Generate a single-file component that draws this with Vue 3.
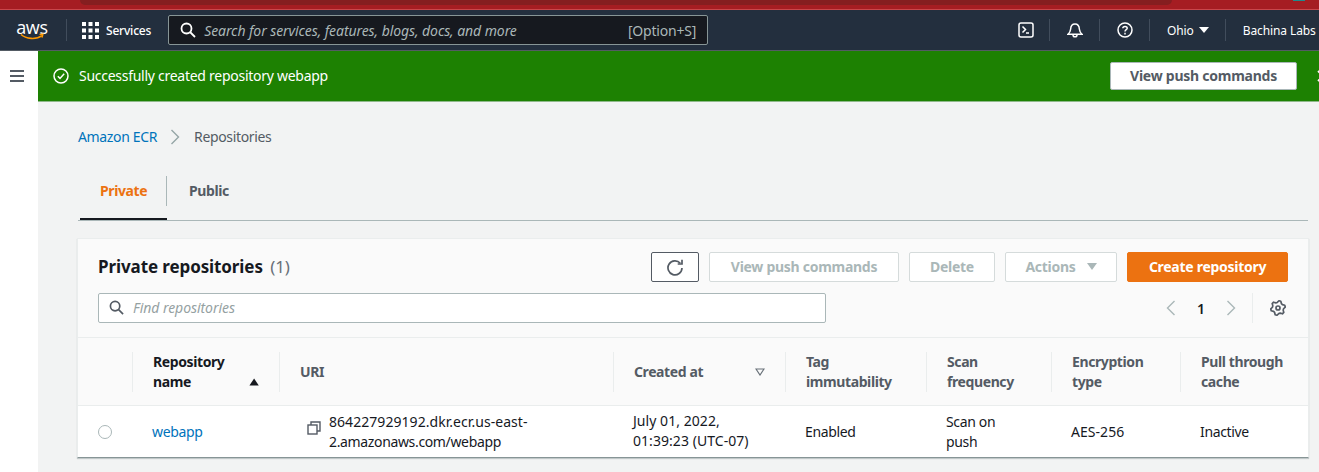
<template>
  <div class="page">
    <div class="browser-strip">
      <div class="strip-tab"></div>
      <div class="strip-dot"></div>
    </div>

    <header class="topnav">
      <div class="logo">
        <span class="logo-text">aws</span>
        <svg class="logo-smile" width="24" height="8" viewBox="0 0 24 8">
          <path d="M1 1.5C6 6 16 7 22 2.6" fill="none" stroke="#ff9900" stroke-width="1.6" />
          <path d="M19.5 1.4L23 1.2L22 4.6" fill="none" stroke="#ff9900" stroke-width="1.3" />
        </svg>
      </div>
      <span class="nav-sep first"></span>
      <svg class="grid-icon" width="17" height="17" viewBox="0 0 17 17" fill="#fff">
        <template v-for="y in [0, 6.5, 13]" :key="y">
          <rect v-for="x in [0, 6.5, 13]" :key="x" :x="x" :y="y" width="4" height="4" />
        </template>
      </svg>
      <span class="services">Services</span>
      <div class="search">
        <svg width="16" height="16" viewBox="0 0 16 16" fill="none" stroke="#fff" stroke-width="1.8">
          <circle cx="6.5" cy="6.5" r="5" />
          <path d="M10 10l5 5" />
        </svg>
        <span class="search-text">Search for services, features, blogs, docs, and more</span>
        <span class="search-key">[Option+S]</span>
      </div>
      <div class="nav-right">
        <svg class="nav-icon" width="16" height="16" viewBox="0 0 16 16" fill="none" stroke="#fff" stroke-width="1.5">
          <rect x="1" y="1" width="14" height="14" rx="2" />
          <path d="M4.500 4.500L7.500 7.500L4.500 10.500M8 11h3" />
        </svg>
        <span class="nav-sep"></span>
        <svg class="nav-icon" width="16" height="16" viewBox="0 0 16 16" fill="none" stroke="#fff" stroke-width="1.5">
          <path d="M1 12.200h14c-1.600-1.400-2.400-2.600-2.600-5C12.200 4 10.600 2 8 2S3.800 4 3.600 7.200c-.2 2.400-1 3.600-2.600 5z" />
          <path d="M6 13c0 2.400 4 2.400 4 0" />
        </svg>
        <span class="nav-sep"></span>
        <svg class="nav-icon" width="16" height="16" viewBox="0 0 16 16" fill="none" stroke="#fff" stroke-width="1.5">
          <circle cx="8" cy="8" r="7" />
          <path d="M5.800 6.200C5.900 3.800 10.200 3.800 10.200 6.200C10.200 7.800 8 7.600 8 9.600" />
          <path d="M8 10.800v1.700" />
        </svg>
        <span class="nav-sep"></span>
        <span class="nav-label ohio">Ohio</span>
        <span class="nav-caret"></span>
        <span class="nav-sep"></span>
        <span class="nav-label account">Bachina Labs</span>
      </div>
    </header>

    <div class="body">
      <aside class="side">
        <svg width="14" height="12" viewBox="0 0 14 12" fill="#545b64">
          <rect width="14" height="2" />
          <rect y="5" width="14" height="2" />
          <rect y="10" width="14" height="2" />
        </svg>
      </aside>

      <main class="main">
        <div class="flash">
          <svg width="16" height="16" viewBox="0 0 16 16" fill="none" stroke="#fff" stroke-width="1.5">
            <circle cx="8" cy="8" r="7" />
            <path d="M4.800 8.200L7 10.400L11.200 5.800" />
          </svg>
          <span class="flash-text">Successfully created repository webapp</span>
          <button class="flash-btn">View push commands</button>
          <svg class="flash-x" width="12" height="12" viewBox="0 0 12 12" stroke="#fff" stroke-width="1.8" fill="none">
            <path d="M1 1l10 10M11 1L1 11" />
          </svg>
        </div>

        <div class="content">
          <nav class="crumbs">
            <a class="link">Amazon ECR</a>
            <svg width="10" height="16" viewBox="0 0 10 16" fill="none" stroke="#95a5a6" stroke-width="1.4">
              <path d="M1.500 1l7 7-7 7" />
            </svg>
            <span>Repositories</span>
          </nav>

          <div class="tabs">
            <div class="tab active"><span>Private</span></div>
            <div class="tab public"><span>Public</span></div>
          </div>

          <section class="card">
            <div class="card-head">
              <div class="head-row">
                <h2>Private repositories <span class="count">(1)</span></h2>
                <div class="actions">
                  <button class="btn refresh">
                    <svg width="16" height="17" viewBox="0 0 16 17" fill="none" stroke="#545b64" stroke-width="1.7">
                      <path d="M13.300 4.300A7 7 0 1 0 15 9" />
                      <path d="M15 .8V5h-4.300" />
                    </svg>
                  </button>
                  <button class="btn off wide">View push commands</button>
                  <button class="btn off del">Delete</button>
                  <button class="btn off act">Actions <i class="caret"></i></button>
                  <button class="btn primary">Create repository</button>
                </div>
              </div>
              <div class="head-row second">
                <div class="find">
                  <svg width="15" height="15" viewBox="0 0 16 16" fill="none" stroke="#545b64" stroke-width="1.8">
                    <circle cx="6.500" cy="6.500" r="5" />
                    <path d="M10 10l5 5" />
                  </svg>
                  <span>Find repositories</span>
                </div>
                <div class="pager">
                  <svg width="10" height="16" viewBox="0 0 10 16" fill="none" stroke="#aab7b8" stroke-width="1.4">
                    <path d="M8.500 1L1.500 8l7 7" />
                  </svg>
                  <span class="page-no">1</span>
                  <svg width="10" height="16" viewBox="0 0 10 16" fill="none" stroke="#aab7b8" stroke-width="1.4">
                    <path d="M1.500 1l7 7-7 7" />
                  </svg>
                  <span class="pager-sep"></span>
                  <svg width="16" height="16" viewBox="0 0 16 16" fill="none" stroke="#545b64" stroke-width="1.700">
                    <polygon :points="gearPoints" stroke-linejoin="round" />
                    <circle cx="8" cy="8" r="2" />
                  </svg>
                </div>
              </div>
            </div>

            <div class="table">
              <div class="th first-col"></div>
              <div v-for="c in columns" :key="c.label" class="th" :class="{ dark: c.dark }">
                <span class="th-inner">
                  <span class="th-label" :class="{ narrow: c.narrow }">{{ c.label }}</span>
                  <svg v-if="c.sort === 'up'" class="sort up" width="12" height="8" viewBox="0 0 12 8" fill="#16191f">
                    <path d="M6 0l5.500 8H.5z" />
                  </svg>
                  <svg v-if="c.sort === 'down'" class="sort" width="10" height="8" viewBox="0 0 10 8" fill="none" stroke="#687078" stroke-width="1.200">
                    <path d="M1 1h8L5 7z" />
                  </svg>
                </span>
              </div>

              <div class="td radio-cell"><span class="radio"></span></div>
              <div class="td"><a class="link">webapp</a></div>
              <div class="td uri">
                <svg width="14" height="14" viewBox="0 0 14 14" fill="none" stroke="#545b64" stroke-width="1.400">
                  <rect x="1" y="4" width="9" height="9" />
                  <path d="M4 4V1h9v9h-3" />
                </svg>
                <span>
                  <span class="line num">864227929192.dkr.ecr.us-east-</span>
                  <span class="line">2.amazonaws.com/webapp</span>
                </span>
              </div>
              <div class="td num">July 01, 2022,<br />01:39:23 (UTC-07)</div>
              <div class="td">Enabled</div>
              <div class="td">Scan on<br />push</div>
              <div class="td num">AES-256</div>
              <div class="td">Inactive</div>
            </div>
          </section>
        </div>
      </main>
    </div>
  </div>
</template>

<script setup>
const columns = [
  { label: 'Repository name', sort: 'up', dark: true, narrow: true },
  { label: 'URI' },
  { label: 'Created at', sort: 'down' },
  { label: 'Tag immutability', narrow: true },
  { label: 'Scan frequency', narrow: true },
  { label: 'Encryption type', narrow: true },
  { label: 'Pull through cache', narrow: true },
]

// six lobes, flat on top, for the preferences gear
const gearPoints = Array.from({ length: 24 }, (_, i) => {
  const step = i % 4
  const r = step === 1 || step === 2 ? 7.3 : 5.6
  const a = ((i * 15 - 97.5) * Math.PI) / 180
  return `${(8 + r * Math.cos(a)).toFixed(2)},${(8 + r * Math.sin(a)).toFixed(2)}`
}).join(' ')
</script>

<style>
html,
body {
  margin: 0;
  overflow: hidden;
}
</style>

<style scoped>
.page {
  width: 1319px;
  height: 472px;
  overflow: hidden;
  font-family: "Noto Sans", "Liberation Sans", sans-serif;
  font-size: 14px;
  color: #16191f;
  background: #fff;
  display: flex;
  flex-direction: column;
}
.browser-strip {
  height: 9px;
  flex: none;
  background: #a51d22;
  border-bottom: 1px solid #c9474b;
  display: flex;
}
.strip-tab {
  width: 1092px;
  height: 5px;
  margin-left: 80px;
  background: #851e20;
  border-radius: 0 0 6px 6px;
}
.strip-dot {
  width: 12px;
  height: 1px;
  margin-left: 121px;
  background: #1f8a8c;
}
.topnav {
  height: 40px;
  flex: none;
  background: #232f3e;
  display: flex;
  align-items: center;
  color: #fff;
  border-bottom: 1px solid #545b64;
}
.logo {
  width: 32px;
  margin-left: 16px;
  display: flex;
  flex-direction: column;
  align-items: center;
}
.logo-text {
  font-size: 18px;
  line-height: 17px;
  letter-spacing: -0.3px;
  font-family: "Open Sans", sans-serif;
}
.logo-smile {
  margin-top: -3px;
}
.nav-sep {
  width: 1px;
  height: 22px;
  background: #414d5c;
  flex: none;
}
.nav-sep.first {
  margin-left: 18px;
}
.grid-icon {
  margin-left: 15px;
}
.services {
  margin-left: 7px;
  font-size: 12px;
  font-weight: 500;
  letter-spacing: -0.2px;
}
.search {
  width: 521px;
  height: 28px;
  margin-left: 17px;
  background: #16191f;
  border: 1px solid #879596;
  border-radius: 2px;
  display: flex;
  align-items: center;
  padding: 0 6px 0 11px;
  color: #aab7b8;
}
.search-text {
  margin-left: 8px;
  font-style: italic;
  letter-spacing: -0.08px;
}
.search-key {
  margin-left: auto;
  margin-right: 5px;
  letter-spacing: -0.2px;
}
.nav-right {
  margin-left: auto;
  display: flex;
  align-items: center;
  width: 302px;
}
.nav-icon {
  flex: none;
  margin-right: 16px;
}
.nav-right > svg:first-child {
  margin-left: 1px;
  margin-right: 15px;
}
.nav-right > .nav-sep {
  margin-right: 17px;
}
.nav-label {
  font-size: 12px;
  letter-spacing: -0.1px;
  white-space: nowrap;
}
.nav-caret {
  width: 0;
  height: 0;
  margin: 0 16px 0 5px;
  border-left: 5px solid transparent;
  border-right: 5px solid transparent;
  border-top: 6px solid #fff;
}
.body {
  flex: 1;
  display: flex;
  min-height: 0;
}
.side {
  width: 38px;
  flex: none;
  background: #fff;
  box-shadow: 1px 0 0 #d5dbdb;
  padding: 16px 0 0 10px;
  box-sizing: border-box;
}
.main {
  flex: 1;
  min-width: 0;
  background: #f2f3f3;
  display: flex;
  flex-direction: column;
}
.flash {
  height: 51px;
  flex: none;
  box-sizing: border-box;
  background: #1d8102;
  border-bottom: 1px solid #8fb98a;
  display: flex;
  align-items: center;
  padding-left: 15px;
  color: #fff;
}
.flash-text {
  margin-left: 10px;
  margin-bottom: 2px;
  letter-spacing: -0.27px;
}
.flash-btn {
  margin-left: auto;
  width: 187px;
  height: 28px;
  background: #fff;
  border: 1px solid #aab7b8;
  border-radius: 2px;
  font: 700 14px "Noto Sans", sans-serif;
  letter-spacing: -0.25px;
  color: #545b64;
  padding: 0 0 2px;
}
.flash-x {
  flex: none;
  margin-left: 20px;
  margin-right: -10px;
}
.content {
  padding: 0 11px 0 40px;
}
.crumbs {
  height: 69px;
  display: flex;
  align-items: center;
  color: #545b64;
  letter-spacing: -0.35px;
}
.crumbs svg {
  margin: 0 14px 0 13px;
}
.link {
  color: #0073bb;
}
.tabs {
  display: flex;
  height: 50px;
  padding-left: 2px;
  margin-top: -1px;
  border-bottom: 1px solid #aab7b8;
  font-weight: 700;
  color: #545b64;
  letter-spacing: -0.4px;
}
.tab {
  width: 87px;
  height: 50px;
  box-sizing: border-box;
  display: flex;
  align-items: center;
  padding: 0 0 10px 20px;
}
.tab.public {
  padding-left: 22px;
}
.tab.active {
  color: #ec7211;
  border-bottom: 2px solid #16191f;
  padding-bottom: 8px;
  position: relative;
}
.tab.active::after {
  content: "";
  position: absolute;
  right: 0;
  top: 6px;
  height: 30px;
  width: 1px;
  background: #aab7b8;
}
.card {
  margin: 17px -1px 0;
  background: #fafafa;
  border: 1px solid #eaeded;
  border-bottom: 1px solid #879596;
  box-shadow: 0 1px 1px rgba(0, 28, 36, 0.2);
}
.card-head {
  padding: 13px 20px 14px;
  border-bottom: 1px solid #eaeded;
}
.head-row {
  display: flex;
  align-items: center;
  justify-content: space-between;
}
.head-row.second {
  margin-top: 11px;
}
h2 {
  margin: 0;
  font-size: 17px;
  line-height: 30px;
  font-weight: 700;
  letter-spacing: -0.1px;
}
.count {
  font-weight: 400;
  color: #687078;
  margin-left: 3px;
}
.actions {
  display: flex;
  gap: 10px;
}
.btn {
  height: 30px;
  box-sizing: border-box;
  border: 1px solid #d5dbdb;
  border-radius: 2px;
  background: #fff;
  font: 700 14px "Noto Sans", sans-serif;
  letter-spacing: -0.28px;
  color: #aab7b8;
  padding: 0 0 2px;
  display: flex;
  align-items: center;
  justify-content: center;
}
.refresh {
  width: 48px;
  border-color: #545b64;
  padding: 0;
}
.wide {
  width: 190px;
}
.del {
  width: 86px;
}
.act {
  width: 112px;
  gap: 11px;
}
.caret {
  width: 0;
  height: 0;
  border-left: 5px solid transparent;
  border-right: 5px solid transparent;
  border-top: 7px solid #aab7b8;
}
.primary {
  width: 161px;
  background: #ec7211;
  border-color: #ec7211;
  color: #fff;
}
.find {
  width: 728px;
  height: 30px;
  box-sizing: border-box;
  background: #fff;
  border: 1px solid #aab7b8;
  border-radius: 2px;
  display: flex;
  align-items: center;
  padding: 0 0 1px 10px;
  gap: 9px;
  font-style: italic;
  color: #95a1a2;
  letter-spacing: -0.05px;
}
.pager {
  display: flex;
  align-items: center;
  margin-right: 2px;
}
.page-no {
  width: 50px;
  text-align: center;
  font-weight: 600;
}
.pager-sep {
  width: 1px;
  height: 30px;
  background: #eaeded;
  margin: 0 17px 0 16px;
}
.table {
  display: grid;
  grid-template-columns: 54px 147px 334px 172px 141px 125px 129px 1fr;
  grid-template-rows: 68px 51px;
}
.th {
  display: flex;
  align-items: center;
  border-bottom: 1px solid #eaeded;
  color: #545b64;
  font-weight: 700;
  letter-spacing: -0.4px;
  line-height: 20px;
}
.th.dark {
  color: #16191f;
}
.th-inner {
  flex: 1;
  height: 40px;
  display: flex;
  align-items: center;
  justify-content: space-between;
  border-left: 1px solid #eaeded;
  padding: 0 20px;
}
.th-label.narrow {
  max-width: 96px;
}
.sort.up {
  align-self: flex-end;
  margin-bottom: 6px;
}
.td {
  background: #fff;
  display: flex;
  align-items: center;
  padding-left: 20px;
  line-height: 20px;
  letter-spacing: -0.35px;
}
.td.num,
.line.num {
  letter-spacing: 0.05px;
}
.td.num {
  display: block;
  padding-top: 5px;
}
.radio {
  width: 12px;
  height: 12px;
  border: 1px solid #aab7b8;
  border-radius: 50%;
  background: #fff;
}
.uri {
  padding-left: 28px;
  gap: 8px;
}
.uri svg {
  flex: none;
  margin-top: -8px;
}
.line {
  display: block;
  white-space: nowrap;
}
.td.num:nth-last-child(2) {
  display: flex;
  padding-top: 0;
}
</style>
